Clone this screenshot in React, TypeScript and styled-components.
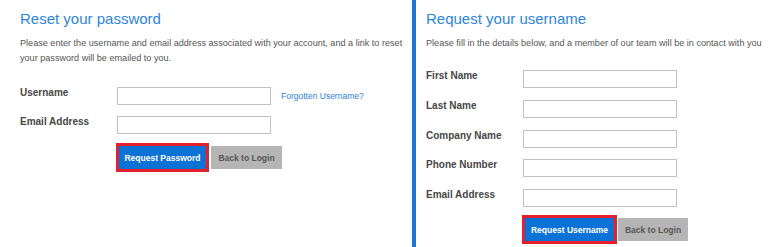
import React from "react";
import styled, { createGlobalStyle } from "styled-components";

const GlobalStyle = createGlobalStyle`
    body {
        margin: 0;
        background: #ffffff;
        font-family: Arial, "Liberation Sans", sans-serif;
    }
`;

const Page = styled.div`
    display: flex;
    width: 768px;
    height: 247px;
    overflow: hidden;
`;

const Panel = styled.section<{ $width?: number; $padLeft: number }>`
    ${props => (props.$width ? `width: ${props.$width}px;` : "flex: 1;")}
    box-sizing: border-box;
    padding: 10px 0 0 ${props => props.$padLeft}px;
`;

const Divider = styled.div`
    width: 4px;
    background: #1b76d6;
    flex-shrink: 0;
`;

const Title = styled.h1`
    margin: 0;
    font-size: 15px;
    line-height: 18px;
    font-weight: normal;
    color: #2c86dc;
`;

const Intro = styled.p<{ $marginBottom: number }>`
    margin: 8px 0 ${props => props.$marginBottom}px;
    font-size: 9.1px;
    line-height: 15px;
    color: #555555;
    white-space: nowrap;
`;

const FormGrid = styled.div<{ $rowGap: number }>`
    display: grid;
    grid-template-columns: 97px 154px auto;
    row-gap: ${props => props.$rowGap}px;
    align-items: start;
`;

const Label = styled.label`
    font-size: 10px;
    font-weight: bold;
    line-height: 12px;
    color: #474747;
`;

const Input = styled.input`
    box-sizing: border-box;
    width: 154px;
    height: 18px;
    margin: 0;
    border: 1px solid #c2c2c2;
    background: #ffffff;
    padding: 0 4px;
    font-size: 10px;
`;

const HelpLink = styled.a`
    align-self: center;
    margin-left: 10px;
    font-size: 8.5px;
    color: #2b7fd8;
    text-decoration: none;
    white-space: nowrap;
`;

const ButtonRow = styled.div<{ $gap: number; $marginTop: number }>`
    display: flex;
    align-items: center;
    gap: ${props => props.$gap}px;
    margin: ${props => props.$marginTop}px 0 0 96px;
`;

const Highlight = styled.div`
    border: 3px solid #e3202c;
    display: flex;
`;

const Button = styled.button<{ $primary?: boolean; $width: number }>`
    box-sizing: border-box;
    width: ${props => props.$width}px;
    height: 23px;
    border: none;
    padding: 0;
    font-family: Arial, "Liberation Sans", sans-serif;
    font-size: 8.5px;
    font-weight: bold;
    background: ${props => (props.$primary ? "#0d72d6" : "#b5b5b5")};
    color: ${props => (props.$primary ? "#ffffff" : "#555555")};
    white-space: nowrap;
`;

const resetFields = ["Username", "Email Address"];
const usernameFields = ["First Name", "Last Name", "Company Name", "Phone Number", "Email Address"];

const App = () => {
    return (
        <>
            <GlobalStyle />
            <Page>
                <Panel $width={412} $padLeft={20}>
                    <Title>Reset your password</Title>
                    <Intro $marginBottom={21}>
                        Please enter the username and email address associated with your account, and a link to reset
                        <br />
                        your password will be emailed to you.
                    </Intro>
                    <FormGrid $rowGap={11}>
                        {resetFields.map((field, i) => (
                            <React.Fragment key={field}>
                                <Label>{field}</Label>
                                <Input />
                                {i === 0 ? <HelpLink href="#">Forgotten Username?</HelpLink> : <span />}
                            </React.Fragment>
                        ))}
                    </FormGrid>
                    <ButtonRow $gap={2} $marginTop={9}>
                        <Highlight>
                            <Button $primary $width={87}>Request Password</Button>
                        </Highlight>
                        <Button $width={71}>Back to Login</Button>
                    </ButtonRow>
                </Panel>
                <Divider />
                <Panel $padLeft={10}>
                    <Title>Request your username</Title>
                    <Intro $marginBottom={19}>
                        Please fill in the details below, and a member of our team will be in contact with you
                    </Intro>
                    <FormGrid $rowGap={11.8}>
                        {usernameFields.map(field => (
                            <React.Fragment key={field}>
                                <Label>{field}</Label>
                                <Input />
                                <span />
                            </React.Fragment>
                        ))}
                    </FormGrid>
                    <ButtonRow $gap={1} $marginTop={8}>
                        <Highlight>
                            <Button $primary $width={89}>Request Username</Button>
                        </Highlight>
                        <Button $width={70}>Back to Login</Button>
                    </ButtonRow>
                </Panel>
            </Page>
        </>
    );
};

export default App;
